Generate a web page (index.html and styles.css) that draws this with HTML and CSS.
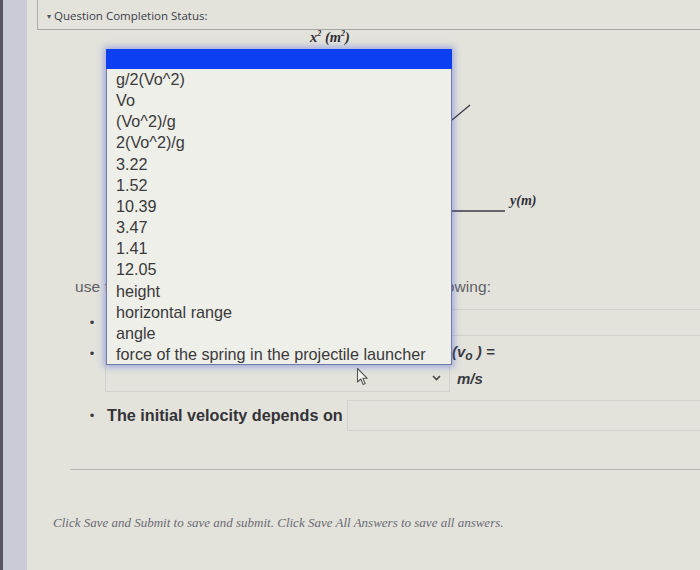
FILE: index.html
```html
<!DOCTYPE html>
<html>
<head>
<meta charset="utf-8">
<link rel="stylesheet" href="styles.css">
</head>
<body>
<div class="screen">
  <div class="bezel"></div>
  <div class="side"></div>
  <div class="main">
    <div class="status"><span class="tri">&#9662;</span> Question Completion Status:</div>

    <div class="graph">
      <span class="xlabel">x<sup>2</sup> (m<sup>2</sup>)</span>
      <svg class="axes" width="673" height="246" viewBox="0 0 673 246">
        <line x1="425" y1="90" x2="443" y2="75" stroke="#3a3a44" stroke-width="1.3"/>
        <line x1="425" y1="181" x2="478" y2="181" stroke="#3a3a44" stroke-width="1.6"/>
      </svg>
      <span class="ylabel">y(m)</span>
    </div>

    <div class="question">
      <p class="intro">use the graphs and equation above to answer the following:</p>
      <ul class="items">
        <li class="item one"><span class="dot">&#8226;</span><span class="box wide"></span></li>
        <li class="item two"><span class="dot">&#8226;</span><span class="spacer"></span><span class="math">(v<sub>o</sub> ) =</span></li>
        <li class="item sel-row">
          <span class="box sel"><svg class="chev" width="9" height="6" viewBox="0 0 9 6"><polyline points="1,1 4.5,4.5 8,1" fill="none" stroke="#444" stroke-width="1.6"/></svg></span>
          <span class="unit">m/s</span>
        </li>
        <li class="item three"><span class="dot">&#8226;</span><span class="bold">The initial velocity depends on</span><span class="box answer"></span></li>
      </ul>
      <hr class="rule">
    </div>

    <p class="foot">Click Save and Submit to save and submit. Click Save All Answers to save all answers.</p>

    <div class="dropdown">
      <div class="sel-bar"></div>
      <ul class="opts">
        <li>g/2(Vo^2)</li>
        <li>Vo</li>
        <li>(Vo^2)/g</li>
        <li>2(Vo^2)/g</li>
        <li>3.22</li>
        <li>1.52</li>
        <li>10.39</li>
        <li>3.47</li>
        <li>1.41</li>
        <li>12.05</li>
        <li>height</li>
        <li>horizontal range</li>
        <li>angle</li>
        <li>force of the spring in the projectile launcher</li>
      </ul>
    </div>

    <svg class="cursor" width="14" height="20" viewBox="0 0 14 20">
      <path d="M1.5 1.5 L1.5 15 L4.8 12 L7.2 17.5 L9.2 16.6 L6.9 11.3 L11.3 11.3 Z" fill="#f4f4f0" stroke="#555" stroke-width="1.1" stroke-linejoin="round"/>
    </svg>
  </div>
</div>
</body>
</html>
```

FILE: styles.css
```css
html, body {
  margin: 0;
  padding: 0;
}
body {
  width: 700px;
  height: 570px;
  overflow: hidden;
  background: #e3e3dc;
  font-family: "Liberation Sans", Arial, sans-serif;
}
.screen {
  display: flex;
  height: 570px;
}
.bezel {
  width: 3px;
  background: #56565c;
  flex: none;
}
.side {
  width: 24px;
  background: #c9ccd6;
  flex: none;
}
.main {
  flex: 1;
  position: relative;
  background: #e3e3dc;
}
.status {
  margin-left: 10px;
  height: 29px;
  border-left: 1px solid #aeaea8;
  border-bottom: 1px solid #a6a6a0;
  box-sizing: content-box;
  font-family: "Open Sans", sans-serif;
  font-size: 11.5px;
  line-height: 31px;
  color: #3c3c48;
  padding-left: 9px;
}
.tri {
  font-size: 8px;
  vertical-align: 1px;
  color: #555;
}
.graph {
  position: relative;
  height: 246px;
}
.axes {
  display: block;
}
.xlabel {
  position: absolute;
  left: 283px;
  top: -1px;
  font-family: "Liberation Serif", serif;
  font-style: italic;
  font-weight: bold;
  font-size: 14.5px;
  color: #2e2e36;
}
.xlabel sup {
  font-size: 8px;
}
.ylabel {
  position: absolute;
  left: 483px;
  top: 163px;
  font-family: "Liberation Serif", serif;
  font-style: italic;
  font-weight: bold;
  font-size: 14px;
  color: #2e2e36;
}
.question {
  padding-left: 48px;
}
.intro {
  margin: 0;
  font-size: 15.5px;
  line-height: 22px;
  color: #606064;
  white-space: nowrap;
  letter-spacing: 0.12px;
}
.items {
  list-style: none;
  margin: 0;
  padding: 0;
}
.item {
  display: flex;
  align-items: center;
  position: relative;
}
.dot {
  width: 30px;
  flex: none;
  font-size: 13px;
  color: #3c3c3c;
  text-align: center;
  margin-left: 2px;
}
.box {
  display: block;
  border: 1px solid #d2d2cc;
  box-sizing: border-box;
}
.item.one {
  margin-top: 11px;
  height: 27px;
}
.box.wide {
  flex: 1;
  height: 27px;
  border-right: none;
}
.item.two {
  margin-top: 6px;
  height: 22px;
}
.spacer {
  width: 345px;
  flex: none;
}
.math {
  font-weight: bold;
  font-style: italic;
  color: #3a3a42;
  font-size: 15px;
}
.math sub {
  font-size: 12px;
  vertical-align: -3px;
}
.item.sel-row {
  margin-top: 1px;
  height: 27px;
  padding-left: 30px;
}
.box.sel {
  width: 345px;
  height: 27px;
  border-top: none;
  display: flex;
  align-items: center;
  justify-content: flex-end;
  padding-right: 8px;
}
.unit {
  margin-left: 7px;
  font-weight: bold;
  font-style: italic;
  font-size: 15px;
  color: #3a3a42;
}
.item.three {
  margin-top: 8px;
  height: 31px;
}
.bold {
  font-weight: bold;
  font-size: 16.2px;
  color: #333338;
  white-space: nowrap;
}
.box.answer {
  flex: 1;
  height: 31px;
  margin-left: 4px;
  border-right: none;
}
.rule {
  margin: 38px 0 0 -5px;
  border: none;
  border-top: 1px solid #b9b9b4;
  height: 0;
}
.foot {
  margin: 45px 0 0 26px;
  font-family: "Liberation Serif", serif;
  font-style: italic;
  font-size: 13px;
  color: #6a6a72;
}
.dropdown {
  position: absolute;
  left: 79px;
  top: 49px;
  width: 346px;
  height: 316px;
  background: #efefea;
  border: 1px solid #6f7aa6;
  border-top: none;
  box-sizing: border-box;
  box-shadow: 0 0 7px 2px rgba(70, 90, 220, 0.45);
}
.sel-bar {
  height: 20px;
  background: #0d3ff2;
  margin: 0 -1px;
}
.opts {
  list-style: none;
  margin: 0;
  padding: 0 0 0 9px;
  font-size: 16.2px;
  line-height: 21.15px;
  color: #3a3a3a;
  white-space: nowrap;
}
.cursor {
  position: absolute;
  left: 329px;
  top: 367px;
}
```
